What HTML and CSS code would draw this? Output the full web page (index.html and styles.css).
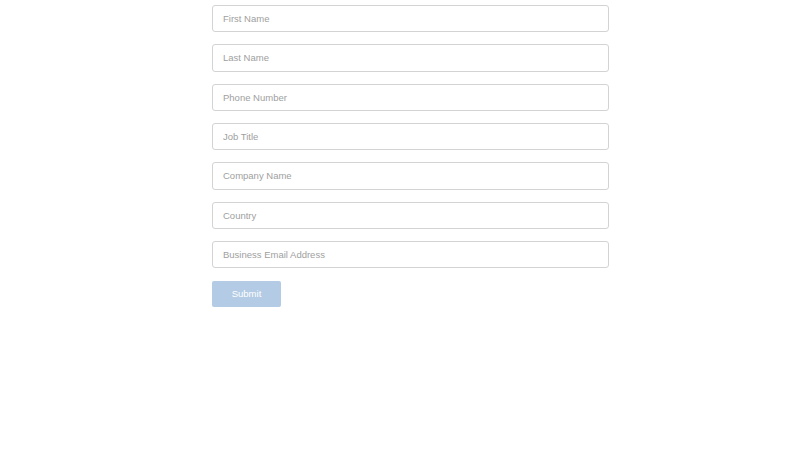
FILE: index.html
```html
<!DOCTYPE html>
<html>
<head>
<meta charset="utf-8">
<link rel="stylesheet" href="styles.css">
</head>
<body>
<form class="form">
  <input class="field" type="text" placeholder="First Name">
  <input class="field" type="text" placeholder="Last Name">
  <input class="field" type="text" placeholder="Phone Number">
  <input class="field" type="text" placeholder="Job Title">
  <input class="field" type="text" placeholder="Company Name">
  <input class="field" type="text" placeholder="Country">
  <input class="field" type="text" placeholder="Business Email Address">
  <button class="submit" type="button">Submit</button>
</form>
</body>
</html>
```
FILE: styles.css
```css
html, body {
  margin: 0;
  padding: 0;
  background: #ffffff;
  font-family: "Liberation Sans", Arial, sans-serif;
}
.form {
  width: 397px;
  margin: 0 0 0 212px;
  padding-top: 5px;
  display: flex;
  flex-direction: column;
  gap: 12px;
}
.field {
  box-sizing: border-box;
  width: 397px;
  height: 27.33px;
  margin: 0;
  padding: 0 10px;
  border: 1px solid #d3d3d3;
  border-radius: 3px;
  font-family: "Liberation Sans", Arial, sans-serif;
  font-size: 9.5px;
  color: #333;
  background: #fff;
  outline: none;
}
.field::placeholder {
  color: #a0a0a0;
}
.submit {
  box-sizing: border-box;
  width: 69px;
  height: 26px;
  margin-top: 1px;
  border: none;
  border-radius: 2px;
  background: #b3cbe4;
  color: #ffffff;
  font-family: "Liberation Sans", Arial, sans-serif;
  font-size: 9.5px;
  padding: 0 0 2px;
  cursor: pointer;
}
```
